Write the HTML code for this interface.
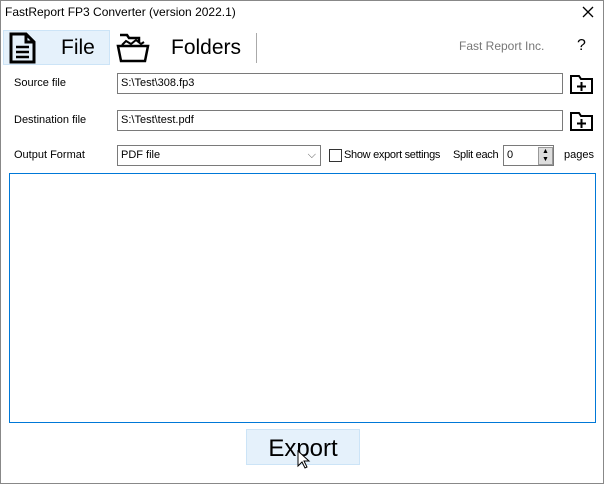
<html><head><style>
body{margin:0;width:604px;height:484px;background:#fff;font-family:"Liberation Sans",sans-serif;position:relative;overflow:hidden}
.a{position:absolute}
.win{left:0;top:0;width:602px;height:482px;border:1px solid #888}
.in{border:1px solid #7a7a7a;background:#fff;font-size:11px;line-height:19px;padding-left:3px;box-sizing:border-box}
.lbl{font-size:11px;color:#000}
</style></head><body>
<div class="a win"></div>
<div class="a" style="left:5px;top:5px;font-size:12px">FastReport FP3 Converter (version 2022.1)</div>
<svg class="a" style="left:582px;top:6px" width="12" height="12"><path d="M1 1L11 11M11 1L1 11" stroke="#000" stroke-width="1.3"/></svg>
<div class="a" style="left:3px;top:30px;width:107px;height:35px;background:#e5f1fb;border:1px solid #cce4f7;box-sizing:border-box"></div>
<svg class="a" style="left:8px;top:32px" width="30" height="32" viewBox="0 0 30 32"><path d="M3 2h15l8 8v20H3z M18 2v8h8" fill="none" stroke="#000" stroke-width="3"/><path d="M8 15h13M8 20h13M8 25h13" stroke="#000" stroke-width="2.5"/></svg>
<div class="a" style="left:61px;top:36px;font-size:21px">File</div>
<svg class="a" style="left:116px;top:33px" width="34" height="30" viewBox="0 0 34 30"><path d="M4 2h7l2 3h10v4" fill="none" stroke="#000" stroke-width="2.5"/><path d="M6 12l4-4 5 3 5-4 5 4 3-2" fill="none" stroke="#000" stroke-width="2"/><path d="M2 13h30l-3 15H5z" fill="none" stroke="#000" stroke-width="2.5"/></svg>
<div class="a" style="left:171px;top:36px;font-size:21px">Folders</div>
<div class="a" style="left:256px;top:33px;width:1px;height:30px;background:#aaa"></div>
<div class="a" style="left:459px;top:39px;font-size:12px;color:#777">Fast Report Inc.</div>
<div class="a" style="left:577px;top:37px;font-size:16px">?</div>
<div class="a lbl" style="left:14px;top:77px">Source file</div>
<div class="a in" style="left:117px;top:73px;width:446px;height:21px">S:\Test\308.fp3</div>
<div class="a lbl" style="left:14px;top:114px">Destination file</div>
<div class="a in" style="left:117px;top:110px;width:446px;height:21px">S:\Test\test.pdf</div>
<svg class="a" style="left:569px;top:73px" width="26" height="22"><path d="M2 3h8l2 3h11v14H2z" fill="#fff" stroke="#000" stroke-width="2"/><path d="M12.5 9v9M8 13.5h9" stroke="#000" stroke-width="2"/></svg>
<svg class="a" style="left:569px;top:110px" width="26" height="22"><path d="M2 3h8l2 3h11v14H2z" fill="#fff" stroke="#000" stroke-width="2"/><path d="M12.5 9v9M8 13.5h9" stroke="#000" stroke-width="2"/></svg>
<div class="a lbl" style="left:14px;top:149px">Output Format</div>
<div class="a in" style="left:117px;top:145px;width:204px;height:21px">PDF file<span style="position:absolute;right:4px;top:0;color:#555">⌵</span></div>
<div class="a" style="left:329px;top:149px;width:11px;height:11px;border:1px solid #333"></div>
<div class="a lbl" style="left:344px;top:149px;letter-spacing:-0.3px">Show export settings</div>
<div class="a lbl" style="left:453px;top:149px;letter-spacing:-0.3px">Split each</div>
<div class="a in" style="left:503px;top:145px;width:51px;height:21px">0</div>
<div class="a" style="left:538px;top:147px;width:13px;height:16px;background:#ddd;border:1px solid #999;font-size:7px;line-height:8px;text-align:center">▲<br>▼</div>
<div class="a lbl" style="left:564px;top:149px">pages</div>
<div class="a" style="left:9px;top:173px;width:585px;height:248px;border:1px solid #0078d7;background:#fff"></div>
<div class="a" style="left:246px;top:429px;width:114px;height:36px;background:#e5f1fb;border:1px solid #cce4f7;box-sizing:border-box;font-size:24px;text-align:center;line-height:38px">Export</div>
<svg class="a" style="left:297px;top:450px" width="14" height="20"><path d="M1 1v15l4-4 3 6 2-1-3-6h5z" fill="#fff" stroke="#000" stroke-width="1"/></svg>
</body></html>
